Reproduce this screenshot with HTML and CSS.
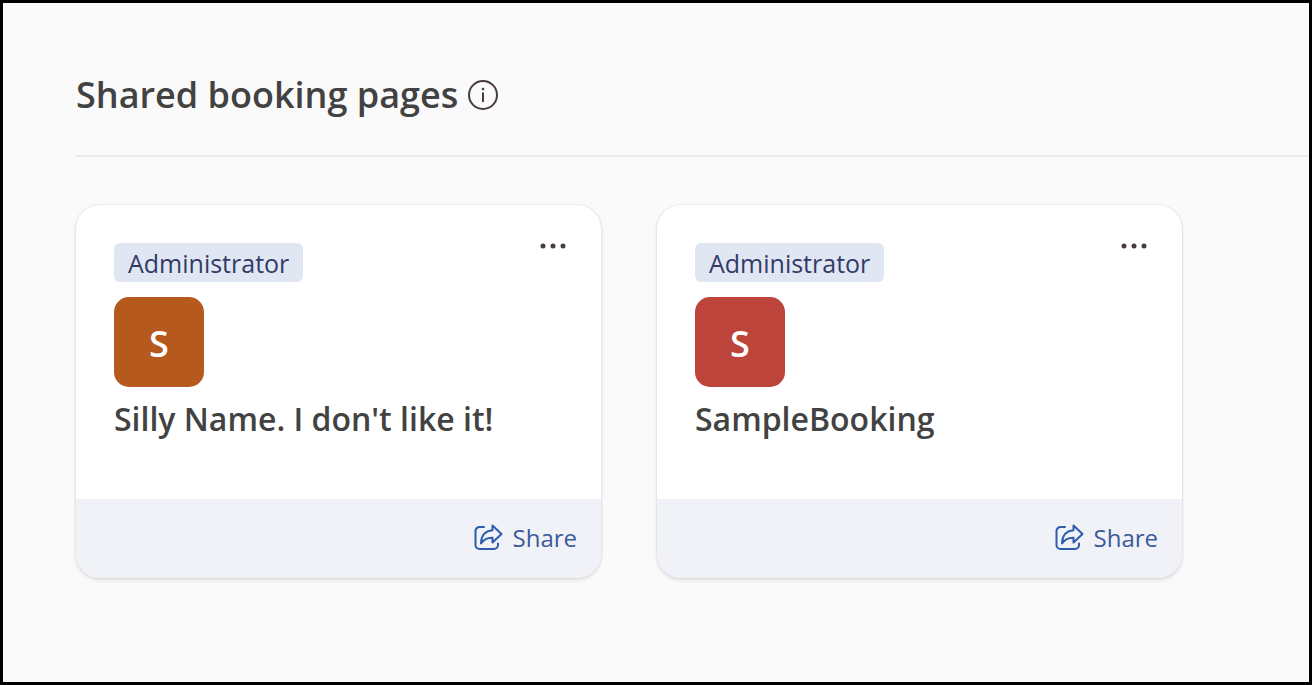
FILE: index.html
```html
<!DOCTYPE html>
<html lang="en">
<head>
<meta charset="utf-8">
<meta name="viewport" content="width=device-width, initial-scale=1">
<title>Shared booking pages</title>
<link rel="stylesheet" href="styles.css">
</head>
<body>
<svg hidden>
  <symbol id="icon-share" viewBox="0 0 30 30">
    <path d="M11 4H6.500A4 4 0 0 0 2.500 8V22A4 4 0 0 0 6.500 26H21A4 4 0 0 0 25 22V20.500"/>
    <path d="M19.500 2.500L28.500 11L19.500 19.500V14.700C14.500 14.500 11 16.300 8 20.500C8.300 12.500 12.500 7.800 19.500 7.300Z"/>
  </symbol>
  <symbol id="icon-more" viewBox="0 0 26 6">
    <circle cx="3" cy="3" r="2.500"/><circle cx="13" cy="3" r="2.500"/><circle cx="23" cy="3" r="2.500"/>
  </symbol>
</svg>
<main class="page">
  <header class="page-header">
    <h1 class="page-title">Shared booking pages</h1>
    <button class="info-button" type="button" aria-label="About shared booking pages">
      <svg class="info-icon" viewBox="0 0 30 30" aria-hidden="true">
        <circle class="info-ring" cx="15" cy="15" r="14"/>
        <circle cx="15" cy="9" r="1.300"/>
        <path class="info-ring" d="M15 12.500V22"/>
      </svg>
    </button>
  </header>
  <section class="cards">
    <article class="card">
      <div class="card-body">
        <div class="card-top">
          <span class="badge">Administrator</span>
          <button class="more-button" type="button" aria-label="More options"><svg class="more-icon" aria-hidden="true"><use href="#icon-more"/></svg></button>
        </div>
        <div class="avatar avatar-orange">S</div>
        <h2 class="card-title">Silly Name. I don't like it!</h2>
      </div>
      <footer class="card-footer">
        <button class="share-button" type="button"><svg class="share-icon" aria-hidden="true"><use href="#icon-share"/></svg>Share</button>
      </footer>
    </article>
    <article class="card">
      <div class="card-body">
        <div class="card-top">
          <span class="badge">Administrator</span>
          <button class="more-button" type="button" aria-label="More options"><svg class="more-icon" aria-hidden="true"><use href="#icon-more"/></svg></button>
        </div>
        <div class="avatar avatar-red">S</div>
        <h2 class="card-title">SampleBooking</h2>
      </div>
      <footer class="card-footer">
        <button class="share-button" type="button"><svg class="share-icon" aria-hidden="true"><use href="#icon-share"/></svg>Share</button>
      </footer>
    </article>
  </section>
</main>
</body>
</html>
```
FILE: styles.css
```css
* {
  box-sizing: border-box;
}

body {
  margin: 0;
  background: #fafafa;
  color: #424242;
  font-family: "Segoe UI", "Open Sans", "Noto Sans", sans-serif;
}

button {
  padding: 0;
  border: 0;
  background: none;
  color: inherit;
  font: inherit;
  cursor: pointer;
}

svg {
  display: block;
}

svg[hidden] {
  display: none;
}

.page {
  min-height: 100vh;
  padding: 64px 0 48px 73px;
  border: 3px solid #000;
}

.page-header {
  display: flex;
  align-items: center;
  gap: 10px;
  padding-bottom: 32px;
  border-bottom: 2px solid #eaeaea;
}

.page-title {
  margin: 0;
  font-size: 36px;
  font-weight: 600;
  line-height: 56px;
}

.info-icon {
  width: 30px;
  height: 30px;
  fill: #483c3a;
}

.info-ring {
  fill: none;
  stroke: #483c3a;
  stroke-width: 2;
}

.cards {
  display: grid;
  grid-template-columns: repeat(2, minmax(0, 1fr));
  gap: 56px;
  padding: 48px 127px 0 0;
}

.card {
  display: flex;
  flex-direction: column;
  overflow: hidden;
  border-radius: 24px;
  background: #fff;
  box-shadow: 0 0 2px rgba(0, 0, 0, 0.12), 0 2px 4px rgba(0, 0, 0, 0.12);
}

.card-body {
  flex: 1;
  padding: 38px 35px 56px 38px;
}

.card-top {
  display: flex;
  align-items: flex-start;
  justify-content: space-between;
}

.badge {
  padding: 2px 14px 1px;
  border-radius: 6px;
  background: #e1e7f2;
  color: #323a68;
  font-size: 25px;
  line-height: 36px;
}

.more-icon {
  width: 26px;
  height: 6px;
  fill: #483c3a;
}

.avatar {
  display: grid;
  place-items: center;
  width: 90px;
  height: 90px;
  margin-top: 15px;
  padding-top: 2px;
  border-radius: 15px;
  color: #fff;
  font-size: 36px;
  font-weight: 600;
}

.avatar-orange {
  background: #b5591e;
}

.avatar-red {
  background: #bc443b;
}

.card-title {
  margin: 8px 0 0;
  font-size: 32px;
  font-weight: 600;
  line-height: 48px;
}

.card-footer {
  display: flex;
  justify-content: flex-end;
  padding: 19px 24px 20px;
  background: #f1f2f8;
}

.share-button {
  display: flex;
  align-items: center;
  gap: 10px;
  color: #3a5a9c;
  font-size: 24px;
  line-height: 40px;
}

.share-icon {
  width: 30px;
  height: 30px;
  fill: none;
  stroke: #2c5cab;
  stroke-width: 2;
  stroke-linejoin: round;
  stroke-linecap: round;
}
```
